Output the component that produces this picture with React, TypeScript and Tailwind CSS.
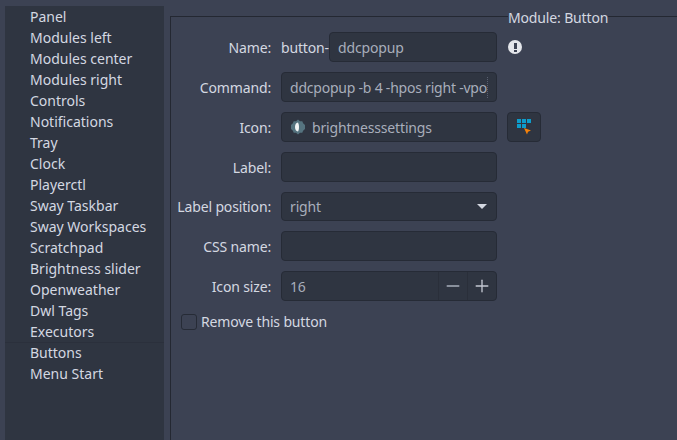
import { Minus, Plus } from "lucide-react";

const sections = [
  "Panel",
  "Modules left",
  "Modules center",
  "Modules right",
  "Controls",
  "Notifications",
  "Tray",
  "Clock",
  "Playerctl",
  "Sway Taskbar",
  "Sway Workspaces",
  "Scratchpad",
  "Brightness slider",
  "Openweather",
  "Dwl Tags",
  "Executors",
  "Buttons",
  "Menu Start",
];

const fieldClass =
  "h-[30px] rounded-[4px] border border-[#262b36] bg-[#2f3541] px-2 flex items-center text-[#a8aebb] overflow-hidden whitespace-nowrap";

function Row({ label, children }: { label: string; children: React.ReactNode }) {
  return (
    <div className="flex items-center h-[30px] mb-[10px]">
      <div className="w-[100px] text-right text-[#d4d8e1] whitespace-nowrap">{label}</div>
      <div className="ml-[10px] flex items-center">{children}</div>
    </div>
  );
}

export default function App() {
  return (
    <div
      className="w-[677px] h-[440px] overflow-hidden bg-[#3c4253] flex text-[14px] leading-[21px]"
      style={{ fontFamily: '"Noto Sans", sans-serif' }}
    >
      <div className="ml-[5px] mt-[6px] w-[159px] h-[434px] shrink-0 bg-[#2f3541] pl-[25px] text-[#d4d8e1]">
        {sections.map((name) => (
          <div
            key={name}
            className={
              name === "Buttons"
                ? "h-[21px] -ml-[25px] pl-[25px] shadow-[inset_0_1px_0_#2b303c] whitespace-nowrap"
                : "h-[21px] whitespace-nowrap"
            }
          >
            {name}
          </div>
        ))}
      </div>

      <div className="relative ml-[6px] mt-[16px] flex-1 border-l border-t border-[#242832] pt-[15px] tracking-[-0.15px]">
        <div className="absolute left-[337px] -top-[10px] bg-[#3c4253] text-[#d4d8e1] whitespace-nowrap">
          Module: Button
        </div>

        <Row label="Name:">
          <span className="w-[48px] text-[#d4d8e1] whitespace-nowrap">button-</span>
          <div className={`${fieldClass} w-[168px]`}>ddcpopup</div>
          <div className="ml-[11px] w-[14px] h-[14px] rounded-full bg-[#e4e6eb] flex flex-col items-center justify-center">
            <span className="block w-[3px] h-[6px] bg-[#3c4253]" />
            <span className="block w-[3px] h-[2px] mt-[1px] bg-[#3c4253]" />
          </div>
        </Row>

        <Row label="Command:">
          <div className={`${fieldClass} w-[216px]`}>
            <span className="block w-[198px] h-[21px] border-r border-dotted border-[#5a6070] tracking-[-0.22px]">
              ddcpopup -b 4 -hpos right -vpo
            </span>
          </div>
        </Row>

        <Row label="Icon:">
          <div className={`${fieldClass} w-[216px]`}>
            <svg width="16" height="16" viewBox="0 0 16 16" className="mr-[6px] shrink-0">
              <path
                d="M8 .5l2 1.700h2.300l.8 2.100L15 6v4l-1.900 1.700-.8 2.100H10L8 15.500l-2-1.700H3.700l-.8-2.100L1 10V6l1.900-1.700.8-2.100H6z"
                fill="#55737f"
              />
              <path d="M8 3.500C5.800 3.800 5 5.800 5 8s.8 4.200 3 4.500C8.800 11 9 9.500 9 8S8.800 5 8 3.500z" fill="#f2f4f5" />
            </svg>
            brightnesssettings
          </div>
          <div className="ml-[10px] w-[34px] h-[30px] rounded-[4px] border border-[#262b36] bg-[#2f3541] flex items-center justify-center">
            <svg width="16" height="16" viewBox="0 0 16 16">
              <rect x="1" y="0" width="4" height="4" fill="#0d9ccb" />
              <rect x="6" y="0" width="4" height="4" fill="#0d9ccb" />
              <rect x="11" y="0" width="4" height="4" fill="#0d9ccb" />
              <rect x="1" y="5" width="4" height="4" fill="#0d9ccb" />
              <rect x="6" y="5" width="4" height="4" fill="#0d9ccb" />
              <path d="M8 9l7 2.500-3 1.200-1 2.800z" fill="#f5820a" />
            </svg>
          </div>
        </Row>

        <Row label="Label:">
          <div className={`${fieldClass} w-[216px]`} />
        </Row>

        <div className="flex items-center h-[29px] mb-[10px]">
          <div className="w-[100px] text-right text-[#d4d8e1] whitespace-nowrap">Label position:</div>
          <div className="ml-[10px] w-[216px] h-[29px] rounded-[4px] border border-[#262b36] bg-[#2f3541] px-2 flex items-center justify-between text-[#a8aebb]">
            <span>right</span>
            <span className="mr-[1px] w-0 h-0 border-l-[5px] border-r-[5px] border-t-[5px] border-l-transparent border-r-transparent border-t-[#d4d8e1]" />
          </div>
        </div>

        <Row label="CSS name:">
          <div className={`${fieldClass} w-[216px]`} />
        </Row>

        <Row label="Icon size:">
          <div className="w-[216px] h-[30px] rounded-[4px] border border-[#262b36] bg-[#2f3541] flex items-center text-[#a8aebb]">
            <span className="flex-1 px-2">16</span>
            <span className="w-[29px] h-full border-l border-[#2a2f3a] flex items-center justify-center">
              <Minus size={20} strokeWidth={1.6} className="text-[#a8aebb]" />
            </span>
            <span className="w-[29px] h-full border-l border-[#2a2f3a] flex items-center justify-center">
              <Plus size={20} strokeWidth={1.6} className="text-[#c4c8d2]" />
            </span>
          </div>
        </Row>

        <div className="flex items-center ml-[10px] mt-[3px]">
          <span className="w-[16px] h-[16px] rounded-[3px] border border-[#262b36] bg-[#3c4253]" />
          <span className="ml-[4px] text-[#d4d8e1] whitespace-nowrap">Remove this button</span>
        </div>
      </div>
    </div>
  );
}
